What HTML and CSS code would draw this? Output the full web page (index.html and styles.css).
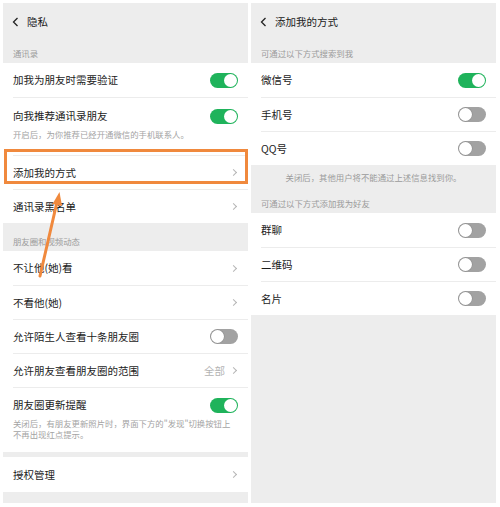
FILE: index.html
```html
<!DOCTYPE html>
<html lang="zh-CN">
<head>
<meta charset="utf-8">
<link rel="stylesheet" href="styles.css">
</head>
<body>
<div class="screen">
  <section class="panel">
    <header class="topbar">
      <svg class="back" width="7" height="10" viewBox="0 0 7 10"><path d="M5.5 1 L1.5 5 L5.5 9" fill="none" stroke="#222" stroke-width="1.3"/></svg>
      <span class="title">隐私</span>
    </header>
    <div class="label first">通讯录</div>
    <div class="group">
      <div class="row"><span class="text">加我为朋友时需要验证</span><span class="switch on"></span></div>
      <div class="row tall">
        <div class="line"><span class="text">向我推荐通讯录朋友</span><span class="switch on"></span></div>
        <span class="sub">开启后，为你推荐已经开通微信的手机联系人。</span>
      </div>
      <div class="row"><span class="text">添加我的方式</span><span class="chev"></span></div>
      <div class="row"><span class="text">通讯录黑名单</span><span class="chev"></span></div>
    </div>
    <div class="label second">朋友圈和视频动态</div>
    <div class="group">
      <div class="row"><span class="text">不让他(她)看</span><span class="chev"></span></div>
      <div class="row"><span class="text">不看他(她)</span><span class="chev"></span></div>
      <div class="row"><span class="text">允许陌生人查看十条朋友圈</span><span class="switch"></span></div>
      <div class="row"><span class="text">允许朋友查看朋友圈的范围</span><span class="value">全部<span class="chev"></span></span></div>
      <div class="row moments">
        <div class="line"><span class="text">朋友圈更新提醒</span><span class="switch on"></span></div>
        <span class="sub multi">关闭后，有朋友更新照片时，界面下方的"发现"切换按钮上<br>不再出现红点提示。</span>
      </div>
    </div>
    <div class="gap"></div>
    <div class="group">
      <div class="row single"><span class="text">授权管理</span><span class="chev"></span></div>
    </div>
  </section>

  <section class="panel">
    <header class="topbar">
      <svg class="back" width="7" height="10" viewBox="0 0 7 10"><path d="M5.5 1 L1.5 5 L5.5 9" fill="none" stroke="#222" stroke-width="1.3"/></svg>
      <span class="title">添加我的方式</span>
    </header>
    <div class="label first">可通过以下方式搜索到我</div>
    <div class="group">
      <div class="row"><span class="text">微信号</span><span class="switch on"></span></div>
      <div class="row"><span class="text">手机号</span><span class="switch"></span></div>
      <div class="row"><span class="text">QQ号</span><span class="switch"></span></div>
    </div>
    <div class="note">关闭后，其他用户将不能通过上述信息找到你。</div>
    <div class="label third">可通过以下方式添加我为好友</div>
    <div class="group">
      <div class="row"><span class="text">群聊</span><span class="switch"></span></div>
      <div class="row"><span class="text">二维码</span><span class="switch"></span></div>
      <div class="row"><span class="text">名片</span><span class="switch"></span></div>
    </div>
  </section>

  <svg class="annot" width="500" height="507" viewBox="0 0 500 507">
    <rect x="5.5" y="150.5" width="241" height="32" fill="none" stroke="#f0893d" stroke-width="3"/>
    <line x1="40" y1="276" x2="57" y2="202" stroke="#f0893d" stroke-width="3" stroke-linecap="round"/>
    <polygon points="59.5,192 52.5,204 62,206" fill="#f0893d"/>
  </svg>
</div>
</body>
</html>
```

FILE: styles.css
```css
* { box-sizing: border-box; }

html, body {
  margin: 0;
  padding: 0;
  background: #ffffff;
}

body {
  font-family: "Noto Sans CJK SC", "Noto Sans", sans-serif;
  color: #1c1c1c;
}

.screen {
  position: relative;
  width: 500px;
  height: 507px;
  display: flex;
  gap: 3px;
  padding: 3px 4px 4px 3px;
}

.panel {
  flex: 1;
  background: #ededed;
  display: flex;
  flex-direction: column;
  overflow: hidden;
}

.topbar {
  height: 38px;
  display: flex;
  align-items: center;
  gap: 8px;
  padding-left: 9px;
  flex-shrink: 0;
}

.back { display: block; }

.title {
  font-size: 10.5px;
  line-height: 14px;
  color: #1a1a1a;
}

.label {
  font-size: 8.4px;
  line-height: 12px;
  color: #9b9b9b;
  padding: 0 10px 4px;
  flex-shrink: 0;
}
.label.first { padding-top: 6px; }
.label.second { padding-top: 12px; }
.label.third { padding-top: 14px; }

.note {
  font-size: 8.4px;
  line-height: 12px;
  color: #9b9b9b;
  text-align: center;
  padding-top: 6px;
}

.group {
  background: #ffffff;
  padding-left: 10px;
  flex-shrink: 0;
}

.row {
  height: 34px;
  display: flex;
  align-items: center;
  justify-content: space-between;
  padding-right: 10px;
}
.row + .row { border-top: 1px solid #ececec; }
.row.tall,
.row.moments {
  flex-direction: column;
  align-items: stretch;
  justify-content: flex-start;
  gap: 5px;
}
.row.tall { height: 58px; padding-top: 11px; }
.row.moments { height: 65px; padding-top: 10px; gap: 6px; }
.row.single { height: 35px; }

.line {
  display: flex;
  align-items: center;
  justify-content: space-between;
  height: 14px;
}

.text {
  font-size: 10.5px;
  line-height: 14px;
  color: #1c1c1c;
  white-space: nowrap;
}

.sub {
  font-size: 8.4px;
  line-height: 12px;
  color: #a3a3a3;
  white-space: nowrap;
}
.sub.multi { line-height: 11px; }

.switch {
  width: 28px;
  height: 15px;
  border-radius: 8px;
  background: #a2a2a2;
  position: relative;
  flex-shrink: 0;
}
.switch::after {
  content: "";
  position: absolute;
  top: 1px;
  left: 1px;
  width: 13px;
  height: 13px;
  border-radius: 50%;
  background: #ffffff;
  box-shadow: 0 0 0 0.5px #8a8a8a;
}
.switch.on { background: #1fb35b; }
.switch.on::after { left: 14px; box-shadow: none; }

.chev {
  width: 5px;
  height: 5px;
  border-top: 1px solid #b5b5b5;
  border-right: 1px solid #b5b5b5;
  transform: rotate(45deg);
  margin-right: 2px;
  flex-shrink: 0;
}

.value {
  display: flex;
  align-items: center;
  gap: 6px;
  font-size: 10.5px;
  color: #b3b3b3;
}

.gap { height: 5px; flex-shrink: 0; }

.annot {
  position: absolute;
  top: 0;
  left: 0;
  pointer-events: none;
}
```
